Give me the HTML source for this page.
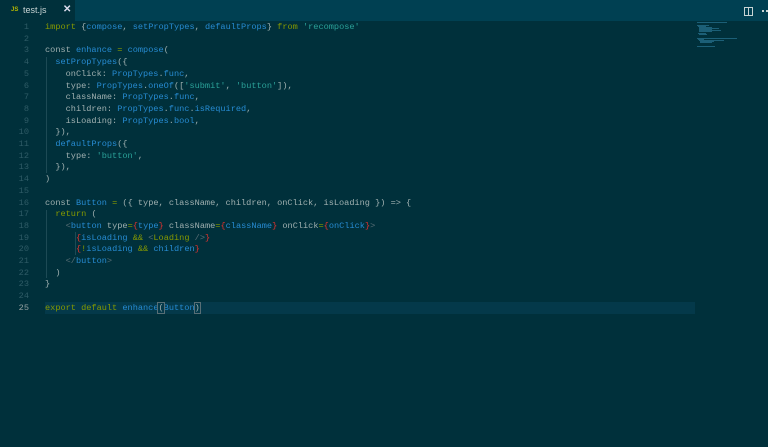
<!DOCTYPE html>
<html><head><style>
body{margin:0;width:768px;height:447px;background:#00303b;overflow:hidden;font-family:"Liberation Mono",monospace;}
.bar{position:absolute;left:0;top:0;width:768px;height:21px;background:#004052;}
.tab{position:absolute;left:0;top:0;width:75px;height:21px;background:#00303b;font-family:"Liberation Sans",sans-serif;font-size:9px;color:#c8d4d4;}
.tab .js{position:absolute;left:11px;top:7px;color:#b5b800;font-weight:bold;font-size:6px}
.tab .n{position:absolute;left:23px;top:5px;}
.tab .x{position:absolute;left:63px;top:4px;font-size:10px;color:#dde;font-weight:bold}
.ic{position:absolute;left:744px;top:7px;width:7px;height:7px;border:1px solid #c8d4d4;}
.ic:after{content:"";position:absolute;left:3px;top:0;width:1px;height:7px;background:#c8d4d4}
.dots{position:absolute;left:762px;top:10px;width:6px;height:2px;border-top:2px dotted #c8d4d4}
.code{position:absolute;top:22px;left:0;font-size:8.6px;line-height:11.7px;white-space:pre;color:#9fb0b0}
.ln{position:absolute;left:0;width:29px;text-align:right;color:#2e5b66}
.l{position:absolute;left:45px}
.hl{position:absolute;left:45px;top:302px;width:650px;height:12px;background:#04394a}
.k{color:#859900}.b{color:#268bd2}.s{color:#2aa198}.r{color:#dc322f}.g{color:#586e75}
.guide{position:absolute;width:1px;background:#1d4a55}
.mm{position:absolute;left:697px;top:22px;width:40px;height:30px;opacity:.6}
</style></head><body>
<div class="bar"></div>
<div class="tab"><span class="js">JS</span><span class="n">test.js</span><span class="x">✕</span></div>
<div class="ic"></div><div class="dots"></div>
<div class="hl"></div>
<div class="guide" style="left:46px;top:57px;height:116px"></div>
<div class="guide" style="left:46px;top:210px;height:68px"></div>
<div class="guide" style="left:75px;top:232px;height:23px"></div>
<svg class="mm" viewBox="0 0 40 30"><g fill="#2f7fa0">
<rect x="0" y="0" width="30" height="1"/><rect x="0" y="3" width="12" height="1"/><rect x="1" y="4" width="8" height="1"/><rect x="2" y="5" width="13" height="1"/><rect x="2" y="6" width="20" height="1"/><rect x="2" y="7" width="13" height="1"/><rect x="2" y="8" width="22" height="1"/><rect x="2" y="9" width="13" height="1"/><rect x="1" y="11" width="8" height="1"/><rect x="2" y="12" width="8" height="1"/><rect x="0" y="16" width="40" height="1"/><rect x="1" y="17" width="6" height="1"/><rect x="2" y="18" width="25" height="1"/><rect x="3" y="19" width="14" height="1"/><rect x="3" y="20" width="12" height="1"/><rect x="0" y="24" width="18" height="1"/></g></svg>
<div class="code">
<div class="ln" style="top:0">1</div><div class="l" style="top:0"><span class="k">import</span> {<span class="b">compose</span>, <span class="b">setPropTypes</span>, <span class="b">defaultProps</span>} <span class="k">from</span> <span class="s">'recompose'</span></div>
<div class="ln" style="top:11.7px">2</div>
<div class="ln" style="top:23.4px">3</div><div class="l" style="top:23.4px">const <span class="b">enhance</span> <span class="k">=</span> <span class="b">compose</span>(</div>
<div class="ln" style="top:35.1px">4</div><div class="l" style="top:35.1px">  <span class="b">setPropTypes</span>({</div>
<div class="ln" style="top:46.8px">5</div><div class="l" style="top:46.8px">    onClick: <span class="b">PropTypes</span>.<span class="b">func</span>,</div>
<div class="ln" style="top:58.5px">6</div><div class="l" style="top:58.5px">    type: <span class="b">PropTypes</span>.<span class="b">oneOf</span>([<span class="s">'submit'</span>, <span class="s">'button'</span>]),</div>
<div class="ln" style="top:70.2px">7</div><div class="l" style="top:70.2px">    className: <span class="b">PropTypes</span>.<span class="b">func</span>,</div>
<div class="ln" style="top:81.9px">8</div><div class="l" style="top:81.9px">    children: <span class="b">PropTypes</span>.<span class="b">func</span>.<span class="b">isRequired</span>,</div>
<div class="ln" style="top:93.6px">9</div><div class="l" style="top:93.6px">    isLoading: <span class="b">PropTypes</span>.<span class="b">bool</span>,</div>
<div class="ln" style="top:105.3px">10</div><div class="l" style="top:105.3px">  }),</div>
<div class="ln" style="top:117px">11</div><div class="l" style="top:117px">  <span class="b">defaultProps</span>({</div>
<div class="ln" style="top:128.7px">12</div><div class="l" style="top:128.7px">    type: <span class="s">'button'</span>,</div>
<div class="ln" style="top:140.4px">13</div><div class="l" style="top:140.4px">  }),</div>
<div class="ln" style="top:152.1px">14</div><div class="l" style="top:152.1px">)</div>
<div class="ln" style="top:163.8px">15</div>
<div class="ln" style="top:175.5px">16</div><div class="l" style="top:175.5px">const <span class="b">Button</span> <span class="k">=</span> ({ type, className, children, onClick, isLoading }) =&gt; {</div>
<div class="ln" style="top:187.2px">17</div><div class="l" style="top:187.2px">  <span class="k">return</span> (</div>
<div class="ln" style="top:198.9px">18</div><div class="l" style="top:198.9px">    <span class="g">&lt;</span><span class="b">button</span> type<span class="k">=</span><span class="r">{</span><span class="b">type</span><span class="r">}</span> className<span class="k">=</span><span class="r">{</span><span class="b">className</span><span class="r">}</span> onClick<span class="k">=</span><span class="r">{</span><span class="b">onClick</span><span class="r">}</span><span class="g">&gt;</span></div>
<div class="ln" style="top:210.6px">19</div><div class="l" style="top:210.6px">      <span class="r">{</span><span class="b">isLoading</span> <span class="k">&amp;&amp;</span> <span class="g">&lt;</span><span class="k">Loading</span> <span class="g">/&gt;</span><span class="r">}</span></div>
<div class="ln" style="top:222.3px">20</div><div class="l" style="top:222.3px">      <span class="r">{</span><span class="k">!</span><span class="b">isLoading</span> <span class="k">&amp;&amp;</span> <span class="b">children</span><span class="r">}</span></div>
<div class="ln" style="top:234px">21</div><div class="l" style="top:234px">    <span class="g">&lt;/</span><span class="b">button</span><span class="g">&gt;</span></div>
<div class="ln" style="top:245.7px">22</div><div class="l" style="top:245.7px">  )</div>
<div class="ln" style="top:257.4px">23</div><div class="l" style="top:257.4px">}</div>
<div class="ln" style="top:269.1px">24</div>
<div class="ln" style="top:280.8px;color:#93a1a1">25</div><div class="l" style="top:280.8px"><span class="k">export default</span> <span class="b">enhance</span><span style="outline:1px solid #586e75">(</span><span class="b">Button</span><span style="outline:1px solid #586e75">)</span></div>
</div>
</body></html>
